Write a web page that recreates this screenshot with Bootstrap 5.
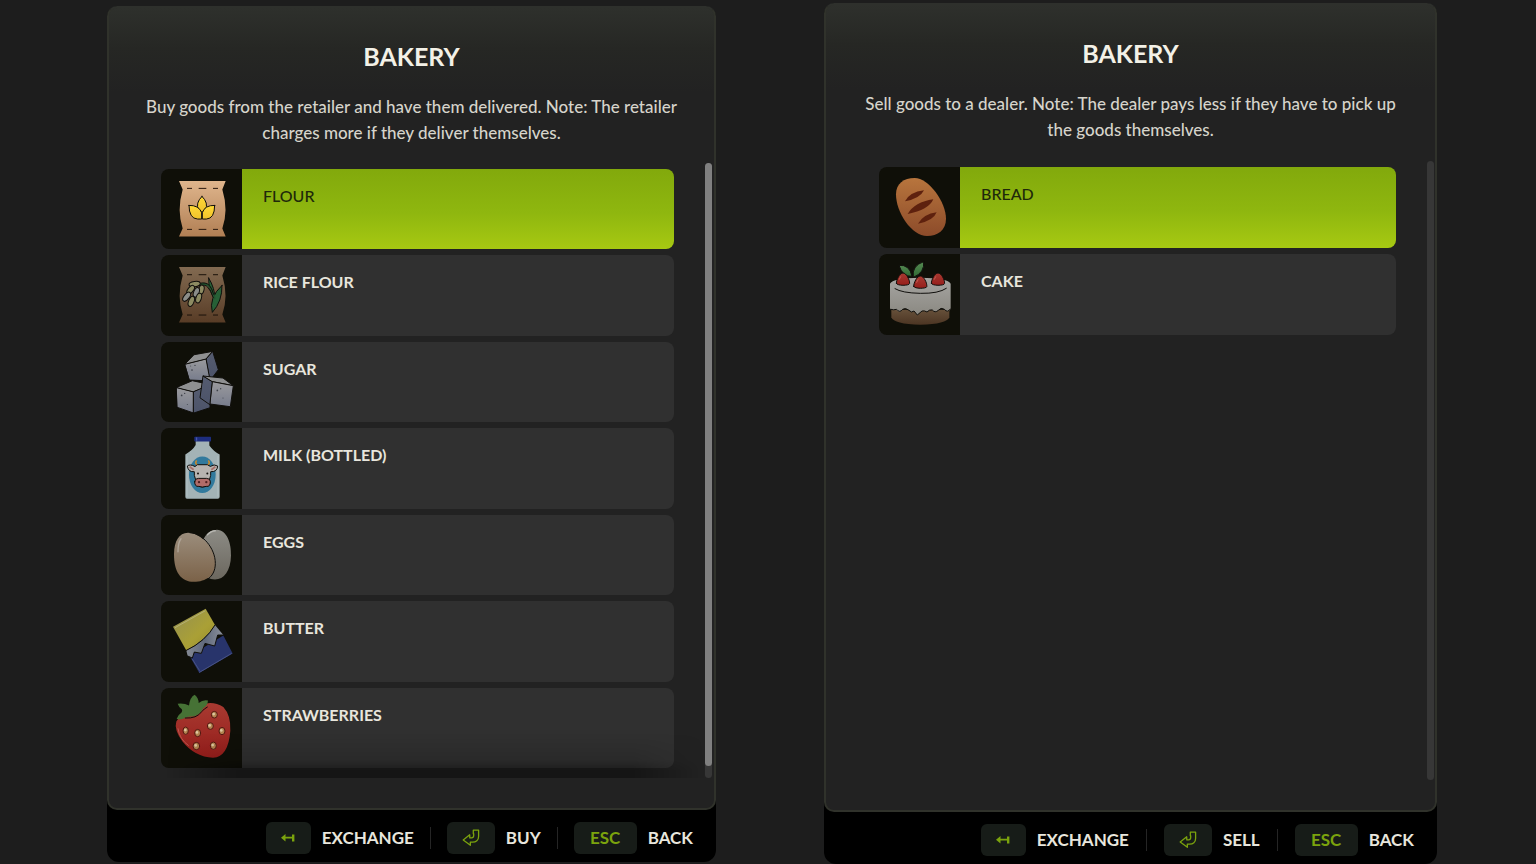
<!DOCTYPE html>
<html lang="en">
<head>
<meta charset="utf-8">
<meta name="viewport" content="width=device-width, initial-scale=1">
<title>Bakery</title>
<link href="https://cdn.jsdelivr.net/npm/bootstrap@5.3.0/dist/css/bootstrap.min.css" rel="stylesheet">
<style>
  body { background: #1d1d1d; color: #e8e6dd; font-family: Lato, "Open Sans", sans-serif; }
  .shops { display: grid; grid-template-columns: 609fr 613fr; column-gap: 108px; min-height: 100vh; padding: 0 99px 0 107px; }
  .shop { background: #000; border-radius: 12px; }
  .shop-buy { margin: 6px 0 2px; }
  .shop-sell { margin-top: 3px; }
  .sheet { background: linear-gradient(#2e302c, #262724 40px, #222 84px); border: 2px solid #30322b; border-top-color: #2e302c; border-radius: 10px; padding: 33px 0 30px; }
  .shop-title { font-size: 25px; line-height: 30px; font-weight: 700; margin: 0 30px 23px; color: #f3f1e7; }
  .shop-note { font-size: 17px; line-height: 26px; font-weight: 500; margin: 0 30px 17px; color: #d6d4cb; }
  .goods-area { gap: 31px; padding: 0 2px 0 52px; }
  .shop-sell .goods-area { padding: 1px 1px 0 53px; }
  .goods { gap: 6px; margin: 6px 0 10px; position: relative; }
  .goods-fade::after { content: ""; position: absolute; left: 6px; right: -30px; bottom: -10px; height: 44px; pointer-events: none; background: linear-gradient(rgba(0,0,0,0), rgba(0,0,0,.12) 26px, rgba(0,0,0,.36) 36px); -webkit-mask-image: linear-gradient(90deg, transparent, #000 70px, #000 calc(100% - 70px), transparent); mask-image: linear-gradient(90deg, transparent, #000 70px, #000 calc(100% - 70px), transparent); }
  .good { display: flex; min-height: 80px; padding: 0; border: 0; border-radius: 8px; background: none; color: #e8e6dd; text-align: left; overflow: hidden; font-size: 16px; line-height: 20px; font-weight: 700; }
  .goods-short .good { height: 81px; }
  .good.active { color: #20290a; font-weight: 500; }
  .good-icon { flex: 0 0 81px; align-self: stretch; background: #0f0f08; }
  .good-icon svg { display: block; width: 100%; height: 100%; }
  .good-name { flex: 1; align-self: stretch; padding: 17px 21px; background: #303030; }
  .good.active .good-name { background: linear-gradient(#82a90c, #8fb70f 55%, #a7c912); }
  .track { flex: 0 0 7px; border-radius: 4px; background: #373737; }
  .thumb { height: 98%; border-radius: 4px; background: #808080; }
  .keys { height: 52px; padding: 4px 23px 0 0; }
  .keys-button { display: flex; align-items: center; gap: 11px; padding: 0; border: 0; background: none; color: #e8e6dd; font-size: 17px; line-height: 24px; font-weight: 700; }
  .keycap { display: flex; align-items: center; justify-content: center; height: 32px; border-radius: 6px; background: #171c18; color: #7ba30d; }
  .key-tab { width: 45px; } .key-enter { width: 48px; } .key-esc { width: 63px; font: inherit; }
  .key-line { width: 1px; height: 22px; background: #252525; margin: 0 16px; }
  .shop-sell .key-line { margin: 0 17px; }
  .o { stroke: #100f0c; stroke-width: 3; stroke-linejoin: round; stroke-linecap: round; }
</style>
</head>
<body>
<svg width="0" height="0" class="position-absolute" aria-hidden="true">
  <defs>
    <linearGradient id="sack" x1="0" y1="0" x2="0" y2="1"><stop offset="0" stop-color="#dfb58c"/><stop offset="1" stop-color="#b17f54"/></linearGradient>
    <linearGradient id="sackDim" x1="0" y1="0" x2="0" y2="1"><stop offset="0" stop-color="#826a51"/><stop offset="1" stop-color="#583c26"/></linearGradient>
    <linearGradient id="grain" x1="0" y1="0" x2="0" y2="1"><stop offset="0" stop-color="#ffd936"/><stop offset="1" stop-color="#f0c22c"/></linearGradient>
    <linearGradient id="cube" x1="0" y1="0" x2="0" y2="1"><stop offset="0" stop-color="#9a9a9d"/><stop offset="1" stop-color="#777c8c"/></linearGradient>
    <linearGradient id="cubeSide" x1="0" y1="0" x2="0" y2="1"><stop offset="0" stop-color="#555c70"/><stop offset="1" stop-color="#4c5369"/></linearGradient>
    <linearGradient id="eggBrown" x1="0" y1="0" x2="0" y2="1"><stop offset="0" stop-color="#9b8d7c"/><stop offset="1" stop-color="#7b6248"/></linearGradient>
    <linearGradient id="eggWhite" x1="0" y1="0" x2="0" y2="1"><stop offset="0" stop-color="#8c8b85"/><stop offset="1" stop-color="#6c685f"/></linearGradient>
    <linearGradient id="butterY" x1="0" y1="0" x2="1" y2="1"><stop offset="0" stop-color="#928f52"/><stop offset=".6" stop-color="#aaa036"/><stop offset="1" stop-color="#958b2c"/></linearGradient>
    <linearGradient id="foil" x1="0" y1="0" x2="1" y2="0"><stop offset="0" stop-color="#858a95"/><stop offset=".5" stop-color="#60697c"/><stop offset="1" stop-color="#8b909b"/></linearGradient>
    <linearGradient id="berry" x1="0" y1="0" x2="0" y2="1"><stop offset="0" stop-color="#a83a31"/><stop offset="1" stop-color="#961e1b"/></linearGradient>
    <linearGradient id="loaf" x1="0" y1="0" x2="0" y2="1"><stop offset="0" stop-color="#b8753d"/><stop offset="1" stop-color="#8c4b2a"/></linearGradient>
    <linearGradient id="cream" x1="0" y1="0" x2="0" y2="1"><stop offset="0" stop-color="#a6a5a2"/><stop offset="1" stop-color="#8b8982"/></linearGradient>
    <linearGradient id="sponge" x1="0" y1="0" x2="0" y2="1"><stop offset="0" stop-color="#66503a"/><stop offset="1" stop-color="#4c3523"/></linearGradient>
    <linearGradient id="leaf" x1="0" y1="0" x2="0" y2="1"><stop offset="0" stop-color="#568a52"/><stop offset="1" stop-color="#2f6a34"/></linearGradient>
    <symbol id="key-swap" viewBox="0 0 14 10"><path fill="currentColor" d="M0 4.700 4.500 1V3.800H11V1.400H13.400V8.600H11V5.600H4.500V8.400Z"/></symbol>
    <symbol id="key-return" viewBox="0 0 18 18"><path fill="none" stroke="currentColor" stroke-width="1.300" stroke-linejoin="round" d="M11.300 1.200H16.600V7.500C16.600 11.400 14 13.200 10.500 13.200H8.300L8.400 16.300 1.200 10.900 7.700 5.800 7.800 8.900H9.500C11 8.900 11.700 8.100 11.700 6.600V4.700H11.300Z"/></symbol>
    <symbol id="strawb" viewBox="0 0 44 44"><path d="M2 36C2 25 12 5 22 5S42 25 42 36C42 44 2 44 2 36Z" fill="url(#berry)" class="o"/><path d="M11 24 15 16" stroke="#c9645b" stroke-width="2.500" stroke-linecap="round"/></symbol>
  </defs>
</svg>

<main class="shops">
  <section class="shop shop-buy d-flex flex-column" aria-label="Buy goods">
    <div class="sheet d-flex flex-column flex-grow-1">
      <h1 class="shop-title text-center">BAKERY</h1>
      <p class="shop-note text-center">Buy goods from the retailer and have them delivered. Note: The retailer<br>charges more if they deliver themselves.</p>
      <div class="goods-area d-flex flex-grow-1">
        <div class="goods goods-fade d-flex flex-column flex-grow-1">
          <button type="button" class="good active flex-grow-1">
            <span class="good-icon"><svg viewBox="18 27 243 241" aria-hidden="true">
              <path d="M72 63H212L202 88Q221 150 202 205L212 229H72L83 205Q65 150 83 88Z" fill="url(#sack)"/>
              <path d="M96 85H111M131 85H154M174 85H189M96 208H111M131 208H154M174 208H189" stroke="#2a190e" stroke-width="3"/>
              <g fill="url(#grain)" class="o"><path d="M141 109Q162 130 151 149L141 157 131 149Q120 130 141 109Z"/><path d="M102 136Q132 135 140 158V177H128Q102 176 102 136Z"/><path d="M179 136Q149 135 142 158V177H154Q179 176 179 136Z"/></g>
            </svg></span><span class="good-name">FLOUR</span>
          </button>
          <button type="button" class="good flex-grow-1">
            <span class="good-icon"><svg viewBox="18 286 243 241" aria-hidden="true">
              <path d="M72 322H212L202 347Q221 409 202 464L212 488H72L83 464Q65 409 83 347Z" fill="url(#sackDim)"/>
              <path d="M96 345H111M131 345H154M174 345H189M96 466H111M131 466H154M174 466H189" stroke="#1b120a" stroke-width="3"/>
              <g class="o" fill="#276036"><path d="M161 355Q180 385 180 420Q160 390 161 355Z"/><path d="M201 377Q202 425 172 458Q160 415 201 377Z"/><path d="M136 374Q151 370 161 378Q171 386 178 415" fill="none" stroke="#22552f" stroke-width="7"/><path d="M134 371Q152 366 163 377Q170 384 176 404M132 378Q151 373 158 382Q167 392 175 414" fill="none"/></g>
              <g class="o" fill="#8d8b62"><ellipse cx="119" cy="373" rx="17" ry="8" transform="rotate(-8 119 373)"/><ellipse cx="139" cy="390" rx="8" ry="14" transform="rotate(15 139 390)"/><ellipse cx="107" cy="390" rx="8" ry="15" transform="rotate(38 107 390)"/><ellipse cx="124" cy="398" rx="8" ry="15" transform="rotate(22 124 398)" fill="#8b8d89"/><ellipse cx="95" cy="411" rx="8" ry="16" transform="rotate(38 95 411)" fill="#8b8d89"/><ellipse cx="131" cy="415" rx="8" ry="15" transform="rotate(18 131 415)"/><ellipse cx="109" cy="425" rx="8" ry="16" transform="rotate(22 109 425)"/></g>
            </svg></span><span class="good-name">RICE FLOUR</span>
          </button>
          <button type="button" class="good flex-grow-1">
            <span class="good-icon"><svg viewBox="18 20 243 241" aria-hidden="true">
              <g class="o"><path d="M90 86 154 70 165 124 150 136 104 134Z" fill="url(#cube)"/><path d="M90 86 117 58 173 48 154 70Z" fill="#8f9091"/><path d="M154 70 173 48 190 103 171 128 164 124Z" fill="url(#cubeSide)"/>
              <path d="M65 156 116 169V233L67 216Z" fill="url(#cube)"/><path d="M65 156 112 136 150 144 140 160 116 169Z" fill="#8f9091"/><path d="M116 169 141 158 165 200V217L116 233Z" fill="url(#cubeSide)"/>
              <path d="M145 122 173 139 166 209 136 188Z" fill="url(#cubeSide)"/><path d="M145 122 204 128 235 151 173 139Z" fill="#8f9091"/><path d="M173 139 235 151 226 214 166 206Z" fill="url(#cube)"/></g>
              <g fill="#3d4149"><circle cx="111" cy="104" r="2.500"/><circle cx="120" cy="90" r="2"/><circle cx="107" cy="92" r="1.500"/><circle cx="80" cy="180" r="2.500"/><circle cx="89" cy="174" r="2"/><circle cx="97" cy="207" r="1.500"/><circle cx="187" cy="165" r="2.500"/><circle cx="197" cy="160" r="2"/><circle cx="204" cy="188" r="1.500"/></g>
            </svg></span><span class="good-name">SUGAR</span>
          </button>
          <button type="button" class="good flex-grow-1">
            <span class="good-icon"><svg viewBox="18 280 243 241" aria-hidden="true">
              <path d="M122 319H163V332Q176 350 194 359V486Q194 492 188 492H96Q91 492 91 486V359Q113 347 122 331Z" fill="#a3b3b6"/><path d="M96 364V486M189 364V486" stroke="#b2c1c4" stroke-width="3"/>
              <rect x="118" y="306" width="50" height="14" rx="2" fill="#1d2d7e"/><path d="M125 308V318" stroke="#5061b3" stroke-width="3"/>
              <ellipse cx="142" cy="420" rx="40" ry="55" fill="#317a9d"/>
              <path d="M128 391Q119 386 124 379M157 391Q166 386 161 379" fill="none" stroke="#c48a2f" stroke-width="5" stroke-linecap="round"/>
              <g class="o"><path d="M119 395Q105 387 97 394Q100 413 118 411V422Q124 435 121 446Q126 457 142 457T165 446Q161 434 167 422V411Q187 412 188 394Q178 387 166 395L157 390H128Z" fill="#b7b4b0"/><path d="M119 441Q119 431 130 431H155Q166 431 166 441Q166 457 154 455L142 457 131 455Q119 457 119 441Z" fill="#b06c69"/></g>
              <circle cx="129" cy="416" r="3" fill="#15130f"/><circle cx="157" cy="416" r="3" fill="#15130f"/><circle cx="132" cy="442" r="3.500" fill="#4e2020"/><circle cx="154" cy="442" r="3.500" fill="#4e2020"/><path d="M104 396 116 405M181 396 169 405" stroke="#a86e68" stroke-width="5"/>
            </svg></span><span class="good-name">MILK (BOTTLED)</span>
          </button>
          <button type="button" class="good flex-grow-1">
            <span class="good-icon"><svg viewBox="18 13 243 241" aria-hidden="true">
              <path d="M186 57C216 57 230 100 228 134C227 180 207 206 180 206C145 206 137 170 137 125C137 83 160 57 186 57Z" fill="url(#eggWhite)"/><path d="M157 72Q169 60 181 60" stroke="#b7b6b1" stroke-width="4" stroke-linecap="round" fill="none"/>
              <path d="M99 66C137 66 181 112 181 158C181 193 153 213 116 213C78 213 57 184 57 131C57 92 72 66 99 66Z" fill="url(#eggBrown)"/><path d="M105 66C141 66 181 112 181 158C181 180 172 197 157 206" fill="none" class="o"/><path d="M69 123Q69 95 78 84" stroke="#b0a598" stroke-width="4" stroke-linecap="round" fill="none"/>
            </svg></span><span class="good-name">EGGS</span>
          </button>
          <button type="button" class="good flex-grow-1">
            <span class="good-icon"><svg viewBox="18 273 243 241" aria-hidden="true">
              <path d="M54 350 152 296 180 345Q150 393 94 421Z" fill="url(#butterY)"/><path d="M60 353 151 302" stroke="#b5b075" stroke-width="3"/>
              <path d="M104 438 205 376 233 430 133 489Z" fill="#28346b"/><path d="M112 447 134 482M133 487 230 430" stroke="#485384" stroke-width="3"/>
              <path d="M94 421Q146 397 180 345L205 375 188 375 179 408 150 400 139 430 118 426 112 444 98 438Z" fill="url(#foil)"/><path d="M94 421Q151 395 180 345M98 438 112 444 118 426 139 430 150 400 179 408 188 375 205 375" fill="none" class="o"/>
            </svg></span><span class="good-name">BUTTER</span>
          </button>
          <button type="button" class="good flex-grow-1">
            <span class="good-icon"><svg viewBox="18 23 243 241" aria-hidden="true">
              <path d="M64 123Q84 88 130 76Q171 58 205 80Q228 105 226 151Q220 230 174 232Q119 229 83 184Q56 147 64 123Z" fill="url(#berry)"/><path d="M69 145Q74 177 100 195" fill="none" stroke="#bd564e" stroke-width="3" stroke-linecap="round"/>
              <path d="M68 70Q88 68 102 75Q105 50 119 43Q131 53 131 68Q143 57 159 60Q158 76 145 83Q133 107 112 108Q98 108 91 112Q75 121 65 115Q68 104 79 97Q84 89 79 85Q71 79 68 70Z" fill="#467235"/><path d="M91 113Q125 115 140 94Q147 85 157 80" fill="none" class="o"/>
              <g fill="#b1834f" stroke="#551611" stroke-width="3"><ellipse cx="178" cy="103" rx="9" ry="10"/><ellipse cx="166" cy="137" rx="9" ry="10"/><ellipse cx="92" cy="151" rx="8" ry="11"/><ellipse cx="128" cy="158" rx="9" ry="11"/><ellipse cx="201" cy="152" rx="9" ry="11"/><ellipse cx="124" cy="197" rx="10" ry="11"/><ellipse cx="175" cy="196" rx="9" ry="11"/></g>
              <g fill="#dcc6a0"><circle cx="176" cy="101" r="4"/><circle cx="164" cy="135" r="4"/><circle cx="91" cy="149" r="4"/><circle cx="126" cy="156" r="4"/><circle cx="199" cy="150" r="4"/><circle cx="122" cy="195" r="4"/><circle cx="173" cy="194" r="4"/></g>
            </svg></span><span class="good-name">STRAWBERRIES</span>
          </button>
        </div>
        <div class="track"><div class="thumb"></div></div>
      </div>
    </div>
    <footer class="keys d-flex align-items-center justify-content-end">
      <button type="button" class="keys-button"><span class="keycap key-tab"><svg width="14" height="10" aria-hidden="true"><use href="#key-swap"/></svg></span>EXCHANGE</button>
      <span class="key-line"></span>
      <button type="button" class="keys-button"><span class="keycap key-enter"><svg width="18" height="18" aria-hidden="true"><use href="#key-return"/></svg></span>BUY</button>
      <span class="key-line"></span>
      <button type="button" class="keys-button"><kbd class="keycap key-esc p-0">ESC</kbd>BACK</button>
    </footer>
  </section>

  <section class="shop shop-sell d-flex flex-column" aria-label="Sell goods">
    <div class="sheet d-flex flex-column flex-grow-1">
      <h1 class="shop-title text-center">BAKERY</h1>
      <p class="shop-note text-center">Sell goods to a dealer. Note: The dealer pays less if they have to pick up<br>the goods themselves.</p>
      <div class="goods-area d-flex flex-grow-1">
        <div class="goods goods-short d-flex flex-column flex-grow-1">
          <button type="button" class="good active">
            <span class="good-icon"><svg viewBox="27 20 243 243" aria-hidden="true">
              <path d="M134 53C176 53 228 125 228 175C228 209 203 227 171 227C125 227 78 157 78 102C78 70 101 53 134 53Z" fill="url(#loaf)"/>
              <g fill="#5e210e"><path d="M105 123Q119 95 162 90Q150 115 105 123Z"/><path d="M113 161Q134 125 190 117Q176 149 113 161Z"/><path d="M144 190Q161 161 200 156Q190 182 144 190Z"/></g>
            </svg></span><span class="good-name">BREAD</span>
          </button>
          <button type="button" class="good">
            <span class="good-icon"><svg viewBox="27 281 243 243" aria-hidden="true">
              <path d="M64 448H238V471Q230 492 151 493Q72 492 64 471Z" fill="url(#sponge)"/>
              <path d="M60 370Q67 353 151 352Q235 353 242 370V446Q233 459 223 447Q213 440 205 450Q195 459 187 449Q178 447 171 455Q163 450 156 452L142 464 132 452Q124 459 117 450Q106 441 98 447Q89 459 80 449Q70 450 60 446Z" fill="url(#cream)"/>
              <path d="M62 447Q70 450 80 447Q89 459 98 447Q106 441 117 450Q124 459 132 452L142 464 156 452Q163 450 171 455Q178 447 187 449Q195 459 205 450Q213 440 223 447Q233 459 241 446M75 385Q96 398 151 399T229 384" fill="none" class="o"/>
              <g fill="url(#leaf)" class="o"><path d="M87 315Q119 312 126 348Q97 350 87 315Z"/><path d="M161 304Q165 337 130 351Q124 316 161 304Z"/></g>
              <use href="#strawb" x="77" y="333" width="44" height="44"/><use href="#strawb" x="129" y="342" width="44" height="44"/><use href="#strawb" x="182" y="333" width="44" height="44"/>
            </svg></span><span class="good-name">CAKE</span>
          </button>
        </div>
        <div class="track"></div>
      </div>
    </div>
    <footer class="keys d-flex align-items-center justify-content-end">
      <button type="button" class="keys-button"><span class="keycap key-tab"><svg width="14" height="10" aria-hidden="true"><use href="#key-swap"/></svg></span>EXCHANGE</button>
      <span class="key-line"></span>
      <button type="button" class="keys-button"><span class="keycap key-enter"><svg width="18" height="18" aria-hidden="true"><use href="#key-return"/></svg></span>SELL</button>
      <span class="key-line"></span>
      <button type="button" class="keys-button"><kbd class="keycap key-esc p-0">ESC</kbd>BACK</button>
    </footer>
  </section>
</main>
<script src="https://cdn.jsdelivr.net/npm/bootstrap@5.3.0/dist/js/bootstrap.bundle.min.js"></script>
</body>
</html>
